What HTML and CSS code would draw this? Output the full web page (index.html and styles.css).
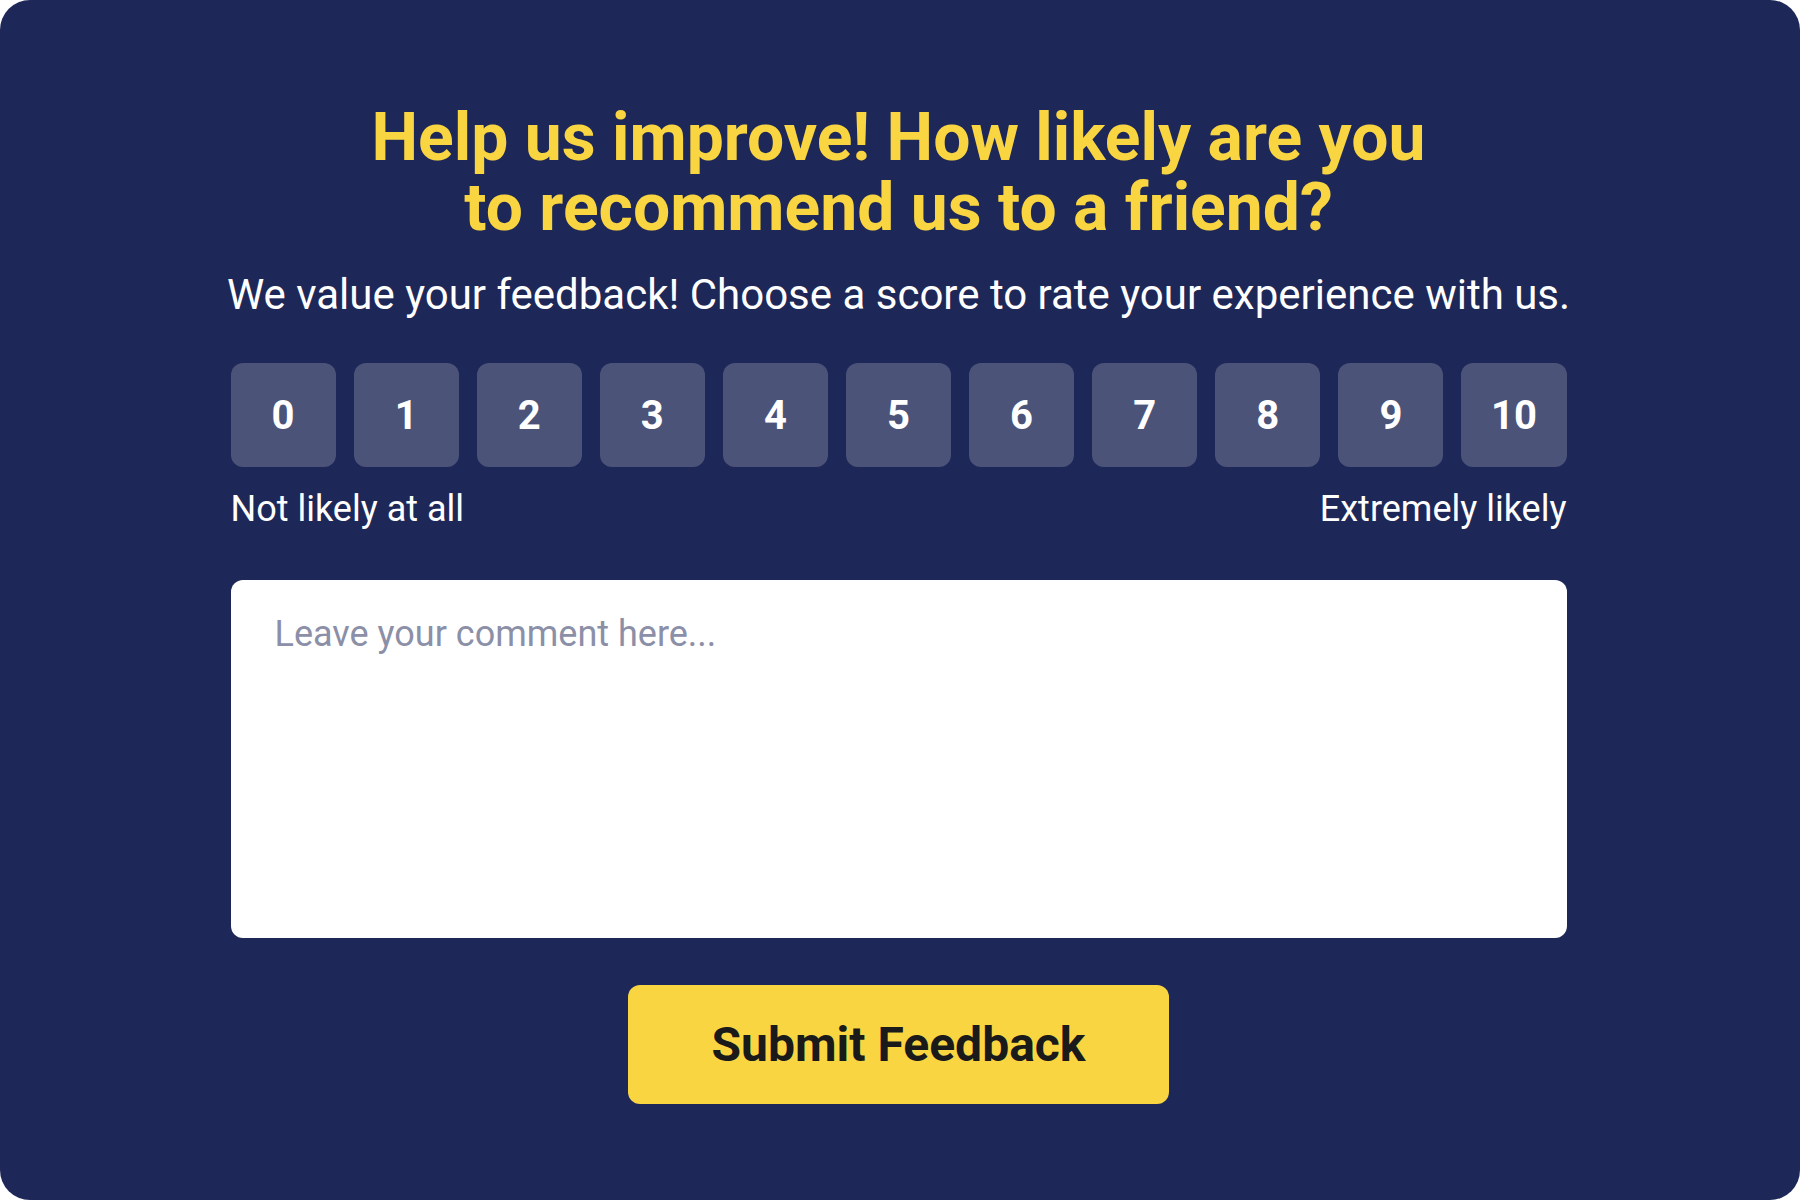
FILE: index.html
```html
<!DOCTYPE html>
<html lang="en">
<head>
    <meta charset="UTF-8">
    <meta name="viewport" content="width=device-width, initial-scale=1.0">
    <title>Feedback</title>
    <link rel="stylesheet" href="styles.css">
</head>
<body>

    <div class="card">
        <h1 class="title">Help us improve! How likely are you<br>to recommend us to a friend?</h1>
        <p class="subtitle">We value your feedback! Choose a score to rate your experience with us.</p>

        <div class="survey">
            <div class="scores">
                <button class="score">0</button>
                <button class="score">1</button>
                <button class="score">2</button>
                <button class="score">3</button>
                <button class="score">4</button>
                <button class="score">5</button>
                <button class="score">6</button>
                <button class="score">7</button>
                <button class="score">8</button>
                <button class="score">9</button>
                <button class="score">10</button>
            </div>
            <div class="labels">
                <span>Not likely at all</span>
                <span>Extremely likely</span>
            </div>
            <textarea class="comment" placeholder="Leave your comment here..."></textarea>
        </div>

        <button class="submit">Submit Feedback</button>
    </div>

</body>
</html>
```

FILE: styles.css
```css
body {
    margin: 0;
    padding: 0;
    background-color: #fff;
    font-family: Roboto, "Liberation Sans", Arial, sans-serif;
}
.card {
    width: 1800px;
    height: 1200px;
    box-sizing: border-box;
    background-color: #1e2858;
    border-radius: 30px;
    display: flex;
    flex-direction: column;
    align-items: center;
    padding-top: 103px;
    padding-right: 3px;
}
.title {
    margin: 0;
    font-size: 66px;
    line-height: 70px;
    font-weight: 700;
    color: #f9d542;
    text-align: center;
}
.subtitle {
    margin: 28px 0 0;
    font-size: 42px;
    line-height: 48px;
    color: #fff;
    text-align: center;
}
.survey {
    width: 1336px;
    margin-top: 44px;
}
.scores {
    display: grid;
    grid-template-columns: repeat(11, 1fr);
    gap: 18px;
}
.score {
    height: 104px;
    border: none;
    border-radius: 12px;
    background-color: rgba(255, 255, 255, 0.2);
    color: #fff;
    font-family: inherit;
    font-size: 40px;
    font-weight: 700;
    cursor: pointer;
    padding: 0;
}
.labels {
    display: flex;
    justify-content: space-between;
    margin-top: 22px;
    font-size: 36px;
    line-height: 40px;
    color: #fff;
}
.comment {
    display: block;
    width: 100%;
    height: 358px;
    margin-top: 51px;
    box-sizing: border-box;
    padding: 33px 44px;
    border: none;
    border-radius: 12px;
    background-color: #fff;
    font-family: inherit;
    font-size: 36px;
    color: #333;
    resize: none;
    outline: none;
}
.comment::placeholder {
    color: #8b8fa7;
}
.submit {
    margin-top: 47px;
    width: 541px;
    height: 119px;
    border: none;
    border-radius: 12px;
    background-color: #f9d542;
    color: #1a1a1a;
    font-family: inherit;
    font-size: 48px;
    font-weight: 700;
    cursor: pointer;
}
```
